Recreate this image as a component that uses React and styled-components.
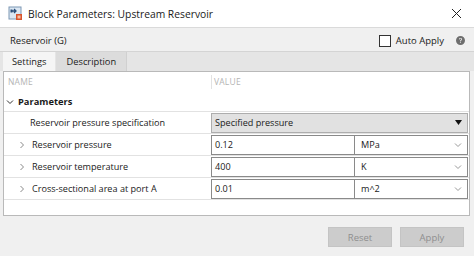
import React from 'react'
import styled, { createGlobalStyle } from 'styled-components'
import { BsQuestionCircleFill } from 'react-icons/bs'

const GlobalStyle = createGlobalStyle`
	html, body {
		margin: 0;
		padding: 0;
		background: #f0f0f0;
	}
	body {
		font-family: 'Open Sans', 'Noto Sans', sans-serif;
		color: #1a1a1a;
	}
`

const Window = styled.div`
	width: 474px;
	height: 256px;
	display: flex;
	flex-direction: column;
	background: #f0f0f0;
	overflow: hidden;
`
const TitleBar = styled.div`
	height: 28px;
	box-sizing: border-box;
	background: #ffffff;
	border-bottom: 1px solid #dadada;
	display: flex;
	align-items: center;
	padding: 0 8px 0 8px;
`
const Title = styled.span`
	margin-left: 5px;
	font-size: 10.3px;
	flex: 1;
`
const Close = styled.svg`
	width: 11px;
	height: 11px;
	margin-right: 4px;
`
const HeaderBand = styled.div`
	height: 24px;
	box-sizing: border-box;
	border-bottom: 1px solid #d4d4d4;
	display: flex;
	align-items: center;
	padding: 2px 9px 0 10px;
	font-size: 9.5px;
`
const BlockName = styled.span`
	flex: 1;
`
const Check = styled.span`
	width: 10px;
	height: 10px;
	border: 1px solid #333;
	background: #fff;
	margin-right: 5px;
`
const AutoApply = styled.span`
	margin-right: 12px;
`
const Help = styled(BsQuestionCircleFill)`
	color: #6e6e6e;
	width: 9px;
	height: 9px;
`
const TabBar = styled.div`
	height: 19px;
	background: #e5e5e5;
	display: flex;
	padding-left: 3px;
`
const Tab = styled.div`
	display: flex;
	align-items: center;
	padding: 0 ${(p) => (p.$active ? '9px' : '10px')};
	font-size: 9.3px;
	background: ${(p) => (p.$active ? '#f5f5f5' : '#dcdcdc')};
	border-right: 1px solid ${(p) => (p.$active ? '#e5e5e5' : '#d0d0d0')};
`
const Body = styled.div`
	padding: 0 4px 0 3px;
`
const Panel = styled.div`
	height: 145px;
	box-sizing: border-box;
	background: #ffffff;
	border: 1px solid #b9b9b9;
	font-size: 9.1px;
`
const HeadRow = styled.div`
	height: 20px;
	display: grid;
	grid-template-columns: 207px 1fr;
	align-items: center;
	color: #b4b4b4;
	font-size: 8.5px;
	letter-spacing: 0.2px;
`
const HeadCell = styled.div`
	padding-left: ${(p) => (p.$value ? '2px' : '4px')};
	border-left: ${(p) => (p.$value ? '1px solid #e2e2e2' : 'none')};
	line-height: 14px;
`
const GroupRow = styled.div`
	height: 19px;
	display: flex;
	align-items: center;
	padding-left: 2px;
	font-weight: 700;
	font-size: 9.3px;
	border-bottom: 1px solid #e2e2e2;
`
const Chevron = styled.svg`
	width: 8px;
	height: 8px;
	margin-right: ${(p) => p.$gap}px;
`
const Row = styled.div`
	height: 21px;
	display: grid;
	grid-template-columns: 207px 1fr;
	align-items: center;
	border-bottom: 1px solid #e2e2e2;
`
const NameCell = styled.div`
	display: flex;
	align-items: center;
	padding-left: ${(p) => (p.$expand ? '14px' : '26px')};
`
const ValueCell = styled.div`
	display: flex;
	height: 20px;
	padding-right: 1px;
`
const Dropdown = styled.div`
	flex: 1;
	box-sizing: border-box;
	display: flex;
	align-items: center;
	justify-content: space-between;
	padding: 0 5px 0 3px;
	background: #e1e1e1;
	border: 1px solid #adadad;
`
const Input = styled.div`
	width: 144px;
	box-sizing: border-box;
	display: flex;
	align-items: center;
	padding-left: 3px;
	border: 1px solid #8a8a8a;
	background: #fff;
`
const Unit = styled.div`
	flex: 1;
	box-sizing: border-box;
	display: flex;
	align-items: center;
	justify-content: space-between;
	padding: 0 5px 0 6px;
	border: 1px solid #8a8a8a;
	border-left: none;
	background: #fff;
`
const Footer = styled.div`
	display: flex;
	justify-content: flex-end;
	gap: 8px;
	padding: 11px 10px 0 0;
`
const Button = styled.div`
	width: 64px;
	height: 20px;
	display: flex;
	align-items: center;
	justify-content: center;
	background: #cccccc;
	border: 1px solid #c4c4c4;
	box-sizing: border-box;
	color: #8f8f8f;
	font-size: 9.5px;
`

const BlockIcon = () => (
	<svg width='15' height='15' viewBox='0 0 15 15'>
		<rect x='1' y='1' width='12' height='12' fill='#dbe7f3' stroke='#7d97b4' />
		<path d='M3 5h5M6 3l2 2-2 2' stroke='#2a4f7a' strokeWidth='1.3' fill='none' />
		<rect x='2.5' y='3.5' width='2' height='3' fill='#2a4f7a' />
		<rect x='8' y='8' width='6' height='6' fill='#d9542c' />
		<rect x='9.5' y='9.5' width='3' height='3' fill='#f7c2a8' />
	</svg>
)

const Right = ({ color = '#8a8a8a' }) => (
	<Chevron $gap={6} viewBox='0 0 8 8'>
		<path d='M2.5 1l3 3-3 3' stroke={color} fill='none' strokeWidth='1' />
	</Chevron>
)

const Down = ({ color = '#9a9a9a', gap = 0 }) => (
	<Chevron $gap={gap} viewBox='0 0 8 8'>
		<path d='M1 2.5l3 3 3-3' stroke={color} fill='none' strokeWidth='1' />
	</Chevron>
)

const params = [
	{ name: 'Reservoir pressure', value: '0.12', unit: 'MPa' },
	{ name: 'Reservoir temperature', value: '400', unit: 'K' },
	{ name: 'Cross-sectional area at port A', value: '0.01', unit: 'm^2' }
]

export default function App() {
	return (
		<>
			<GlobalStyle />
			<Window>
				<TitleBar>
					<BlockIcon />
					<Title>Block Parameters: Upstream Reservoir</Title>
					<Close viewBox='0 0 11 11'>
						<path d='M1 1l9 9M10 1l-9 9' stroke='#222' strokeWidth='1' />
					</Close>
				</TitleBar>
				<HeaderBand>
					<BlockName>Reservoir (G)</BlockName>
					<Check />
					<AutoApply>Auto Apply</AutoApply>
					<Help />
				</HeaderBand>
				<TabBar>
					<Tab $active>Settings</Tab>
					<Tab>Description</Tab>
				</TabBar>
				<Body>
					<Panel>
						<HeadRow>
							<HeadCell>NAME</HeadCell>
							<HeadCell $value>VALUE</HeadCell>
						</HeadRow>
						<GroupRow>
							<Down color='#333' gap={4} />
							Parameters
						</GroupRow>
						<Row>
							<NameCell>Reservoir pressure specification</NameCell>
							<ValueCell>
								<Dropdown>
									Specified pressure
									<svg width='7' height='5' viewBox='0 0 7 5'>
										<path d='M0 0h7L3.5 5z' fill='#111' />
									</svg>
								</Dropdown>
							</ValueCell>
						</Row>
						{params.map((p) => (
							<Row key={p.name}>
								<NameCell $expand>
									<Right />
									{p.name}
								</NameCell>
								<ValueCell>
									<Input>{p.value}</Input>
									<Unit>
										{p.unit}
										<Down />
									</Unit>
								</ValueCell>
							</Row>
						))}
					</Panel>
				</Body>
				<Footer>
					<Button>Reset</Button>
					<Button>Apply</Button>
				</Footer>
			</Window>
		</>
	)
}
